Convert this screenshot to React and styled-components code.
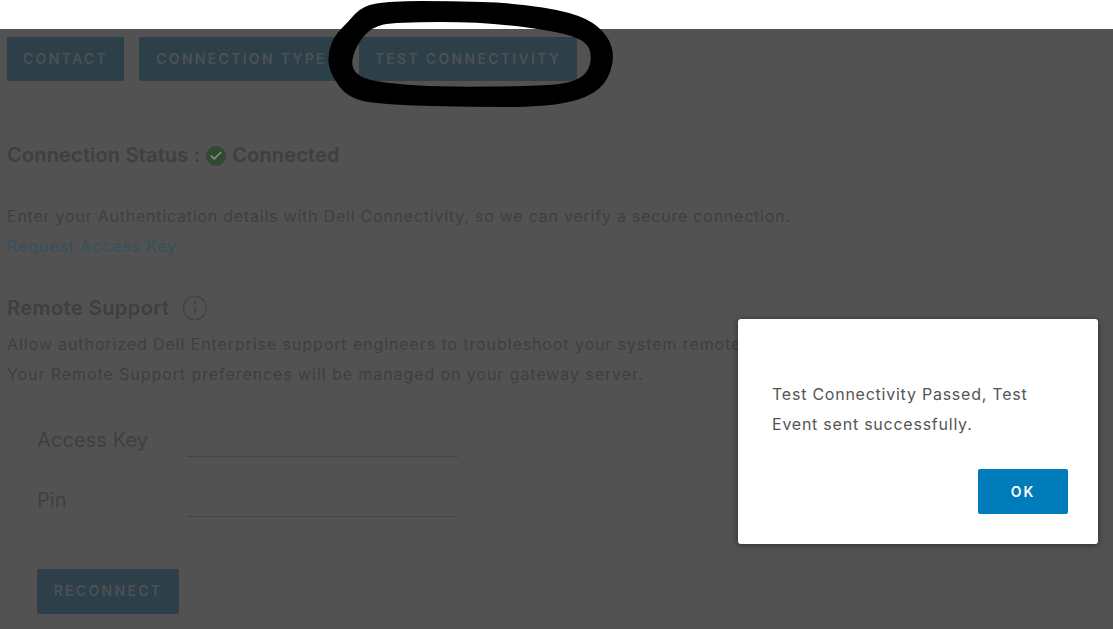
import React from "react";
import styled, { createGlobalStyle } from "styled-components";
import { Check } from "lucide-react";

const GlobalStyle = createGlobalStyle`
  html, body {
    margin: 0;
    padding: 0;
    background: #fff;
    overflow: hidden;
  }
  * {
    box-sizing: border-box;
  }
`;

const Screen = styled.div`
  position: relative;
  width: 1113px;
  height: 629px;
  overflow: hidden;
  font-family: Inter, "Liberation Sans", sans-serif;
  background: #fff;
`;
const TopBand = styled.div`
  height: 29px;
  background: #fff;
`;
const Page = styled.div`
  height: 600px;
  padding: 8px 0 0 7px;
  background: #525252;
  color: #3f3f3f;
`;
const Tabs = styled.div`
  display: flex;
  gap: 15px;
  margin-bottom: 57px;
`;
const DimButton = styled.button`
  height: ${({ $height }) => $height || 44}px;
  width: ${({ $width }) => $width}px;
  padding: 0 0 2px;
  border: 0;
  border-radius: 2px;
  background: #2d3f48;
  color: #4c5154;
  font-family: Inter, sans-serif;
  font-size: 14px;
  font-weight: 600;
  letter-spacing: 2.3px;
  white-space: nowrap;
`;
const StatusRow = styled.div`
  display: flex;
  align-items: center;
  height: 34px;
  font-size: 20px;
  font-weight: 600;
  letter-spacing: 0.17px;
  margin-bottom: 29px;
`;
const StatusBadge = styled.span`
  display: inline-flex;
  align-items: center;
  justify-content: center;
  width: 20px;
  height: 20px;
  margin: 2px 6px 0 6px;
  border-radius: 50%;
  background: #31492f;
  color: #7d937c;
`;
const Line = styled.div`
  height: 30px;
  line-height: 30px;
  font-size: 16px;
  letter-spacing: ${({ $spacing }) => $spacing || 0.77}px;
  white-space: nowrap;
`;
const AccessLink = styled(Line)`
  color: #35505e;
`;
const SectionTitle = styled.div`
  display: flex;
  align-items: center;
  height: 34px;
  margin: 30px 0 4px;
  font-size: 20px;
  font-weight: 600;
  letter-spacing: 0.45px;
`;
const InfoIcon = styled.svg`
  width: 26px;
  height: 26px;
  margin-left: 12px;
  color: #444;
`;
const Form = styled.div`
  margin: 31px 0 0 30px;
`;
const Field = styled.div`
  display: flex;
  align-items: flex-start;
  height: 60px;
`;
const FieldLabel = styled.label`
  width: 150px;
  line-height: 40px;
  font-size: 20px;
  letter-spacing: 0.1px;
`;
const FieldInput = styled.div`
  width: 271px;
  height: 37px;
  border-bottom: 1px solid #444;
`;
const ReconnectRow = styled.div`
  margin-top: 29px;
`;
const Scribble = styled.svg`
  position: absolute;
  left: 0;
  top: 0;
  pointer-events: none;
`;
const Modal = styled.div`
  position: absolute;
  left: 738px;
  top: 319px;
  width: 360px;
  height: 225px;
  padding: 60px 30px 0 34px;
  background: #fff;
  border-radius: 3px;
  box-shadow: 0 1px 6px rgba(0, 0, 0, 0.45);
  color: #555;
`;
const ModalText = styled.p`
  margin: 0;
  font-size: 16px;
  line-height: 30px;
  letter-spacing: 0.76px;
`;
const ModalActions = styled.div`
  display: flex;
  justify-content: flex-end;
  margin-top: 30px;
`;
const OkButton = styled.button`
  width: 90px;
  height: 45px;
  border: 0;
  border-radius: 2px;
  background: #007cbb;
  color: #fff;
  font-family: Inter, sans-serif;
  font-size: 14px;
  font-weight: 600;
  letter-spacing: 2px;
`;

const outerEdge = [
  [328, 52], [335, 35], [348, 22], [362, 6], [391, 1], [450, 1], [514, 3], [571, 12],
  [600, 26], [615, 50], [609, 80], [588, 98], [545, 107], [470, 107], [395, 105],
  [349, 100], [329, 72],
];
const innerEdge = [
  [350, 66], [357, 44], [372, 27], [395, 22], [486, 22], [561, 32], [587, 42], [592, 57],
  [587, 74], [570, 83], [541, 86], [443, 87], [395, 84], [362, 79],
];

// closed smooth outline, quadratic through the midpoints
const smooth = (pts) => {
  const mid = (a, b) => [(a[0] + b[0]) / 2, (a[1] + b[1]) / 2];
  const start = mid(pts[pts.length - 1], pts[0]);
  let d = `M${start[0]} ${start[1]}`;
  pts.forEach((p, i) => {
    const m = mid(p, pts[(i + 1) % pts.length]);
    d += `Q${p[0]} ${p[1]} ${m[0]} ${m[1]}`;
  });
  return d + "Z";
};

export default function App() {
  return (
    <Screen>
      <GlobalStyle />
      <TopBand />
      <Page>
        <Tabs>
          <DimButton $width={117}>CONTACT</DimButton>
          <DimButton $width={205}>CONNECTION TYPE</DimButton>
          <DimButton $width={218}>TEST CONNECTIVITY</DimButton>
        </Tabs>
        <StatusRow>
          Connection Status :
          <StatusBadge>
            <Check size={14} strokeWidth={3} />
          </StatusBadge>
          Connected
        </StatusRow>
        <Line>
          Enter your Authentication details with Dell Connectivity, so we can verify a secure connection.
        </Line>
        <AccessLink $spacing={0.87}>Request Access Key</AccessLink>
        <SectionTitle>
          Remote Support
          <InfoIcon viewBox="0 0 26 26" fill="none" stroke="currentColor" strokeWidth="1.6">
            <circle cx="13" cy="13" r="11.5" />
            <path d="M13 11.5v7.5" />
            <circle cx="13" cy="7.6" r="0.6" />
          </InfoIcon>
        </SectionTitle>
        <Line $spacing={0.9}>
          Allow authorized Dell Enterprise support engineers to troubleshoot your system remotely.
        </Line>
        <Line $spacing={0.92}>Your Remote Support preferences will be managed on your gateway server.</Line>
        <Form>
          <Field>
            <FieldLabel>Access Key</FieldLabel>
            <FieldInput />
          </Field>
          <Field>
            <FieldLabel>Pin</FieldLabel>
            <FieldInput />
          </Field>
          <ReconnectRow>
            <DimButton $width={142} $height={45}>RECONNECT</DimButton>
          </ReconnectRow>
        </Form>
      </Page>
      <Scribble width="1113" height="629" viewBox="0 0 1113 629">
        <path d={smooth(outerEdge) + smooth(innerEdge)} fill="#000" fillRule="evenodd" />
      </Scribble>
      <Modal>
        <ModalText>Test Connectivity Passed, Test Event sent successfully.</ModalText>
        <ModalActions>
          <OkButton>OK</OkButton>
        </ModalActions>
      </Modal>
    </Screen>
  );
}
